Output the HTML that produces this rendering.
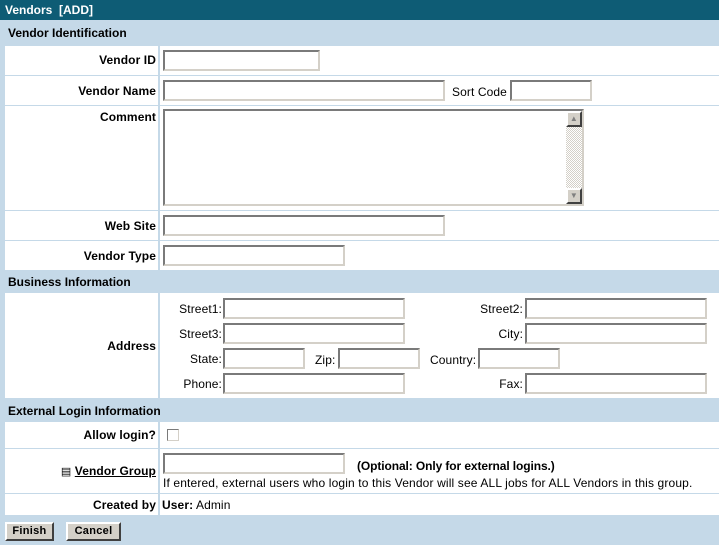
<!DOCTYPE html>
<html><head><meta charset="utf-8"><style>
*{margin:0;padding:0;box-sizing:border-box}
body{width:719px;height:545px;background:#c5d9e8;position:relative;overflow:hidden;font-family:"Liberation Sans",Arial,sans-serif;font-size:12px;color:#000}
div{position:absolute}
.t{left:0;top:0;width:719px;height:20px;background:#0e5c75;color:#fff;font-weight:bold;padding:3px 0 0 5px}
.sec{left:0;width:719px;background:#c5d9e8;font-weight:bold;padding-left:8px}
.row{left:5px;width:714px;background:#fff;border-bottom:1px solid #c5d9e8}
.row:after{content:"";position:absolute;left:153px;top:0;bottom:0;width:2px;background:#c5d9e8}
.lb{right:563px;font-weight:bold;text-align:right;white-space:nowrap;letter-spacing:0.1px}
.in{background:#fff;border:2px solid;border-color:#7a7a7a #d4d0c8 #d4d0c8 #7a7a7a;height:21px}
.s{white-space:nowrap;letter-spacing:0.1px}
.b{font-weight:bold}
.btn{background:#d4d0c8;border:2px solid;border-color:#fff #404040 #404040 #fff;font-weight:bold;font-size:11px;text-align:center;line-height:15px;height:19px;letter-spacing:0.3px}
</style></head><body>
<div class="t">Vendors&nbsp;&nbsp;[ADD]</div>
<div class="sec" style="top:26px">Vendor Identification</div>
<div class="row" style="top:46px;height:30px"></div>
<div class="lb" style="top:53px">Vendor ID</div>
<div class="in" style="left:163px;top:50px;width:157px"></div>
<div class="row" style="top:76px;height:30px"></div>
<div class="lb" style="top:84px">Vendor Name</div>
<div class="in" style="left:163px;top:80px;width:282px"></div>
<div class="s" style="left:452px;top:85px">Sort Code</div>
<div class="in" style="left:510px;top:80px;width:82px"></div>
<div class="row" style="top:106px;height:105px"></div>
<div class="lb" style="top:110px">Comment</div>
<div class="in" style="left:163px;top:109px;width:421px;height:97px"></div>
<div style="left:566px;top:111px;width:16px;height:93px;background:repeating-conic-gradient(#d4d0c8 0 25%,#fff 0 50%) 0 0/2px 2px"></div>
<div class="btn" style="left:566px;top:111px;width:16px;height:16px;font-size:8px;line-height:12px;color:#808080">▲</div>
<div class="btn" style="left:566px;top:188px;width:16px;height:16px;font-size:8px;line-height:12px;color:#808080">▼</div>
<div class="row" style="top:211px;height:30px"></div>
<div class="lb" style="top:219px">Web Site</div>
<div class="in" style="left:163px;top:215px;width:282px"></div>
<div class="row" style="top:241px;height:30px"></div>
<div class="lb" style="top:249px">Vendor Type</div>
<div class="in" style="left:163px;top:245px;width:182px"></div>
<div class="sec" style="top:275px">Business Information</div>
<div class="row" style="top:293px;height:106px"></div>
<div class="lb" style="top:339px">Address</div>
<div class="s" style="right:497px;top:302px">Street1:</div>
<div class="in" style="left:223px;top:298px;width:182px"></div>
<div class="s" style="right:196px;top:302px">Street2:</div>
<div class="in" style="left:525px;top:298px;width:182px"></div>
<div class="s" style="right:497px;top:327px">Street3:</div>
<div class="in" style="left:223px;top:323px;width:182px"></div>
<div class="s" style="right:196px;top:327px">City:</div>
<div class="in" style="left:525px;top:323px;width:182px"></div>
<div class="s" style="right:497px;top:352px">State:</div>
<div class="in" style="left:223px;top:348px;width:82px"></div>
<div class="s" style="left:315px;top:353px">Zip:</div>
<div class="in" style="left:338px;top:348px;width:82px"></div>
<div class="s" style="left:430px;top:353px">Country:</div>
<div class="in" style="left:478px;top:348px;width:82px"></div>
<div class="s" style="right:497px;top:377px">Phone:</div>
<div class="in" style="left:223px;top:373px;width:182px"></div>
<div class="s" style="right:196px;top:377px">Fax:</div>
<div class="in" style="left:525px;top:373px;width:182px"></div>
<div class="sec" style="top:404px">External Login Information</div>
<div class="row" style="top:422px;height:27px"></div>
<div class="lb" style="top:428px">Allow login?</div>
<div style="left:167px;top:429px;width:12px;height:12px;border:1px solid;border-color:#7a7a7a #d4d0c8 #d4d0c8 #7a7a7a;background:#fff"></div>
<div class="row" style="top:449px;height:45px"></div>
<div class="lb" style="top:464px"><span style="font-weight:normal;font-size:11px">&#9636;</span> <u>Vendor Group</u></div>
<div class="in" style="left:163px;top:453px;width:182px"></div>
<div class="s b" style="left:357px;top:459px;letter-spacing:-0.1px">(Optional: Only for external logins.)</div>
<div class="s" style="left:163px;top:476px;letter-spacing:0.14px">If entered, external users who login to this Vendor will see ALL jobs for ALL Vendors in this group.</div>
<div class="row" style="top:494px;height:22px"></div>
<div class="lb" style="top:498px">Created by</div>
<div class="s" style="left:162px;top:498px"><b>User:</b> Admin</div>
<div class="btn" style="left:5px;top:522px;width:49px">Finish</div>
<div class="btn" style="left:66px;top:522px;width:55px">Cancel</div>
</body></html>
